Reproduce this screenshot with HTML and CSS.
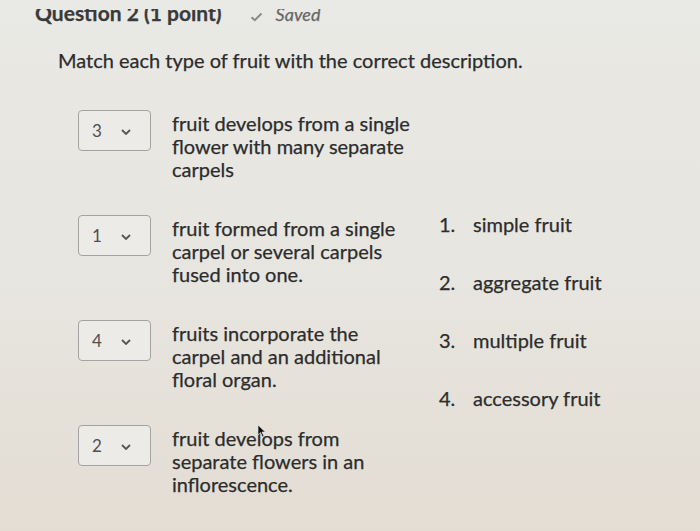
FILE: index.html
```html
<!DOCTYPE html>
<html lang="en">
<head>
<meta charset="utf-8">
<title>Question 2</title>
<link rel="stylesheet" href="styles.css">
</head>
<body>
<div class="page">
  <div class="qhead">
    <div class="qhead-inner">
      <span class="qtitle">Question 2 (1 point)</span>
      <span class="saved">
        <svg class="check" width="13" height="10" viewBox="0 0 13 10"><path d="M1.5 5.2 L4.8 8.2 L11.5 1.5" fill="none" stroke="#8a8a8a" stroke-width="2"/></svg>
        <span class="saved-text">Saved</span>
      </span>
    </div>
  </div>
  <p class="prompt">Match each type of fruit with the correct description.</p>

  <div class="match">
    <div class="pairs">
      <div class="pair">
        <div class="select"><span class="val">3</span><svg class="chev" width="10" height="6" viewBox="0 0 10 6"><path d="M1 1 L5 5 L9 1" fill="none" stroke="#555" stroke-width="1.8"/></svg></div>
        <div class="desc">fruit develops from a single<br>flower with many separate<br>carpels</div>
      </div>
      <div class="pair">
        <div class="select"><span class="val">1</span><svg class="chev" width="10" height="6" viewBox="0 0 10 6"><path d="M1 1 L5 5 L9 1" fill="none" stroke="#555" stroke-width="1.8"/></svg></div>
        <div class="desc">fruit formed from a single<br>carpel or several carpels<br>fused into one.</div>
      </div>
      <div class="pair">
        <div class="select"><span class="val">4</span><svg class="chev" width="10" height="6" viewBox="0 0 10 6"><path d="M1 1 L5 5 L9 1" fill="none" stroke="#555" stroke-width="1.8"/></svg></div>
        <div class="desc">fruits incorporate the<br>carpel and an additional<br>floral organ.</div>
      </div>
      <div class="pair">
        <div class="select"><span class="val">2</span><svg class="chev" width="10" height="6" viewBox="0 0 10 6"><path d="M1 1 L5 5 L9 1" fill="none" stroke="#555" stroke-width="1.8"/></svg></div>
        <div class="desc cursor-host">fruit develops from<br>separate flowers in an<br>inflorescence.
          <svg class="cursor" width="9" height="14" viewBox="0 0 9 14"><path d="M1 1 L1 11 L3.5 8.6 L5.5 13 L7 12.3 L5 8 L8.3 8 Z" fill="#111" stroke="#eee" stroke-width="0.6"/></svg>
        </div>
      </div>
    </div>
    <ol class="answers">
      <li><span class="num">1.</span><span>simple fruit</span></li>
      <li><span class="num">2.</span><span>aggregate fruit</span></li>
      <li><span class="num">3.</span><span>multiple fruit</span></li>
      <li><span class="num">4.</span><span>accessory fruit</span></li>
    </ol>
  </div>
</div>
</body>
</html>
```

FILE: styles.css
```css
html, body {
  margin: 0;
  padding: 0;
  height: 100%;
}
body {
  font-family: Lato, "Open Sans", sans-serif;
  color: #2c2c2c;
  background: linear-gradient(180deg, #e9e9e5 0%, #e7e5df 55%, #e3ddd3 100%);
  overflow: hidden;
  -webkit-text-stroke: 0.25px currentColor;
}
.page {
  width: 700px;
  height: 531px;
}
.qhead {
  margin-top: 9px;
  height: 16px;
  overflow: hidden;
  padding-left: 35px;
}
.qhead-inner {
  display: flex;
  align-items: baseline;
  margin-top: -8px;
  line-height: 24px;
}
.qtitle {
  font-weight: 700;
  font-size: 21px;
  color: #3a3a3a;
}
.saved {
  margin-left: 28px;
  display: flex;
  align-items: baseline;
  gap: 13px;
}
.check {
  position: relative;
  top: 1px;
}
.saved-text {
  font-style: italic;
  font-size: 18px;
  color: #666;
}
.prompt {
  margin: 24px 0 0 58px;
  font-size: 20px;
  line-height: 23px;
}
.match {
  display: flex;
  padding-left: 78px;
  margin-top: 38px;
}
.pairs {
  display: flex;
  flex-direction: column;
  gap: 33px;
  width: 361px;
}
.pair {
  display: flex;
  align-items: flex-start;
  gap: 21px;
}
.select {
  box-sizing: border-box;
  width: 73px;
  height: 41px;
  border: 1px solid #a3a3a1;
  border-radius: 4px;
  background: #ecebe8;
  display: flex;
  align-items: center;
  padding-left: 13px;
  gap: 18px;
  -webkit-text-stroke: 0;
}
.val {
  font-size: 17px;
  color: #4f4f4f;
  width: 11px;
}
.chev {
  margin-top: 2px;
}
.desc {
  font-size: 20px;
  line-height: 23px;
  padding-top: 2px;
  height: 70px;
}
.cursor-host {
  position: relative;
}
.cursor {
  position: absolute;
  left: 85px;
  top: -1px;
}
.answers {
  list-style: none;
  margin: 103px 0 0 0;
  padding: 0;
  display: flex;
  flex-direction: column;
  gap: 35px;
}
.answers li {
  font-size: 20px;
  line-height: 23px;
  display: flex;
}
.num {
  width: 34px;
}
```
